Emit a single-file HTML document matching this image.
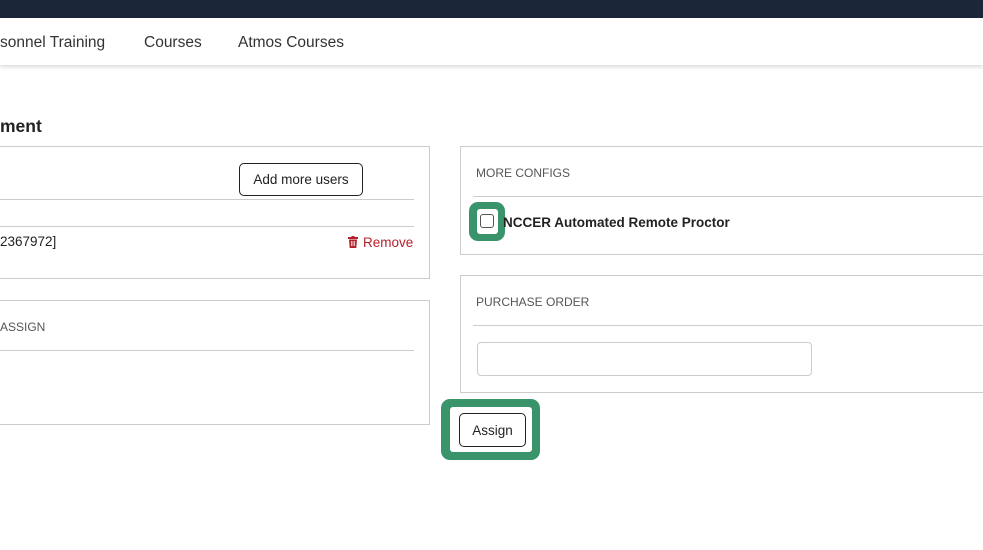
<!DOCTYPE html>
<html><head><style>
body{margin:0;width:983px;height:550px;overflow:hidden;background:#fff;font-family:"Liberation Sans",sans-serif;position:relative;color:#222}
div,span{position:absolute;box-sizing:border-box}
.t{white-space:nowrap}
.box{border:1px solid #ccc;background:#fff}
.ln{height:1px;background:#ccc}
.btn{border:1px solid #222;border-radius:5px;background:#fff;font-size:13.5px;text-align:center;color:#222}
.lab{font-size:12px;color:#555}
</style></head><body>
<div style="left:0;top:0;width:983px;height:18px;background:#1b2638"></div>
<div style="left:0;top:18px;width:983px;height:47px;background:#fff;box-shadow:0 2px 4px rgba(0,0,0,.15)"></div>
<span class="t" style="left:0;top:34px;font-size:15.5px;color:#333">sonnel Training</span>
<span class="t" style="left:144px;top:34px;font-size:15.5px;color:#333">Courses</span>
<span class="t" style="left:238px;top:34px;font-size:15.5px;color:#333">Atmos Courses</span>
<span class="t" style="left:0;top:116px;font-size:17.5px;font-weight:bold;color:#222">ment</span>

<div class="box" style="left:-2px;top:146px;width:432px;height:133px"></div>
<div class="btn" style="left:239px;top:163px;width:124px;height:33px;line-height:31px">Add more users</div>
<div class="ln" style="left:0;top:199px;width:414px"></div>
<div class="ln" style="left:0;top:226px;width:414px"></div>
<span class="t" style="left:0;top:234px;font-size:13.5px">2367972]</span>
<svg style="position:absolute;left:348px;top:236px" width="10" height="12" viewBox="0 0 10 12"><rect x="0" y="1" width="10" height="2" fill="#b5212b"/><rect x="3.5" y="0" width="3" height="1.5" fill="#b5212b"/><path d="M1 3.5h8l-.7 8.5H1.7z" fill="#b5212b"/><path d="M3.5 5v5M5 5v5M6.5 5v5" stroke="#fff" stroke-width=".7"/></svg>
<span class="t" style="left:363px;top:235px;font-size:13.5px;color:#b5212b">Remove</span>

<div class="box" style="left:-2px;top:300px;width:432px;height:125px"></div>
<span class="t lab" style="left:0;top:320px">ASSIGN</span>
<div class="ln" style="left:0;top:350px;width:414px"></div>

<div class="box" style="left:460px;top:146px;width:530px;height:109px"></div>
<span class="t lab" style="left:476px;top:166px">MORE CONFIGS</span>
<div class="ln" style="left:473px;top:196px;width:520px"></div>
<div style="left:469px;top:202px;width:36px;height:39px;background:#3a946b;border-radius:9px"></div>
<div style="left:477px;top:209px;width:21px;height:25px;background:#fff;border-radius:3px"></div>
<div style="left:480px;top:214px;width:14px;height:14px;border:1px solid #555;border-radius:3px;background:#fff"></div>
<span class="t" style="left:503px;top:215px;font-size:13.5px;font-weight:bold;color:#222">NCCER Automated Remote Proctor</span>

<div class="box" style="left:460px;top:275px;width:530px;height:118px"></div>
<span class="t lab" style="left:476px;top:295px">PURCHASE ORDER</span>
<div class="ln" style="left:473px;top:325px;width:520px"></div>
<div style="left:477px;top:342px;width:335px;height:34px;border:1px solid #ccc;border-radius:4px"></div>

<div style="left:441px;top:399px;width:99px;height:61px;background:#3a946b;border-radius:9px"></div>
<div style="left:450px;top:407px;width:82px;height:45px;background:#fff;border-radius:3px"></div>
<div class="btn" style="left:459px;top:413px;width:67px;height:34px;line-height:33px">Assign</div>
</body></html>
